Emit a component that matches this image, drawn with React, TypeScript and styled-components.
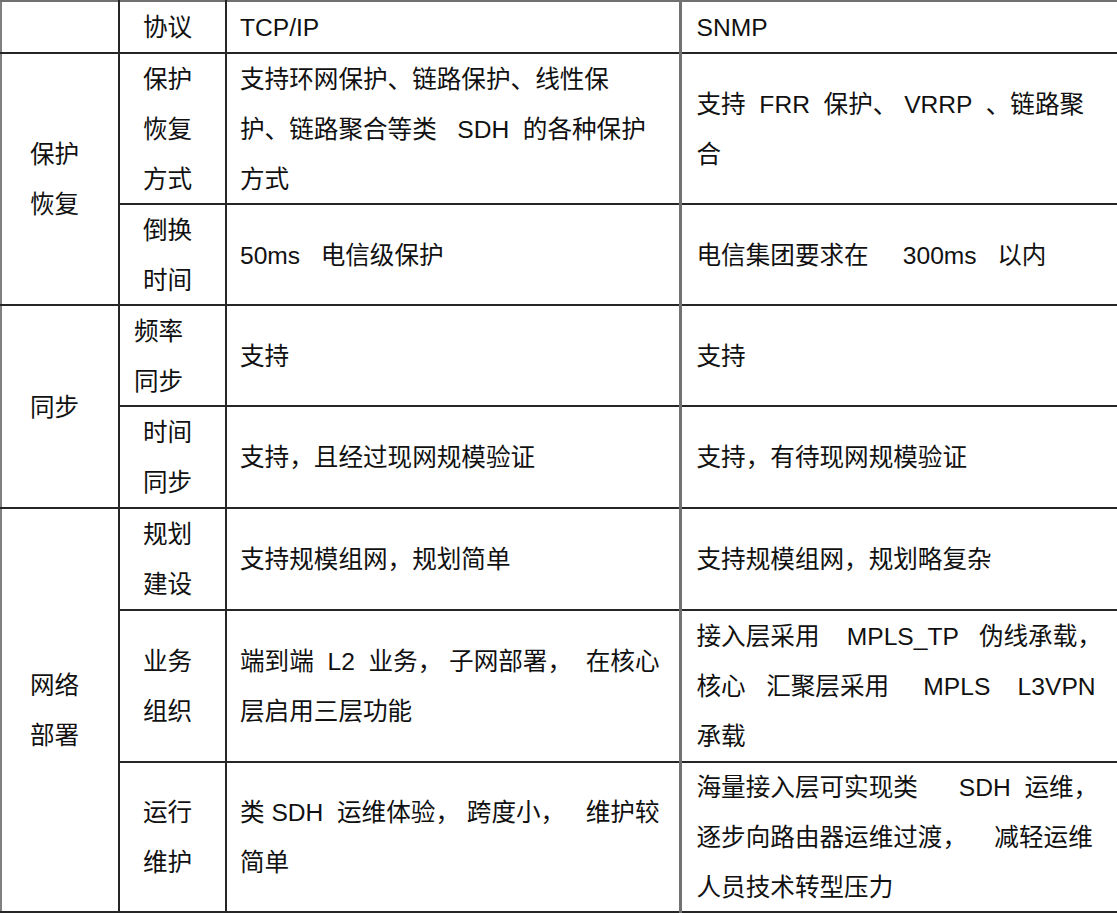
import React from "react";
import styled, { createGlobalStyle } from "styled-components";

const Global = createGlobalStyle`
  html, body { margin: 0; padding: 0; background: #ffffff; }
  body {
    font-family: "Liberation Sans", "Noto Sans CJK SC", sans-serif;
  }
`;

const Table = styled.table`
  width: 1117px;
  table-layout: fixed;
  border-collapse: collapse;
  border-top: 2px solid #707070;
  border-left: 2px solid #808080;
  border-right: 2px solid #8a8a8a;
  border-bottom: 2px solid #1e1e1e;
  font-family: "Liberation Sans", "Noto Sans CJK SC", sans-serif;
  font-size: 24.6px;
  line-height: 50px;
  color: #111111;
`;

const Row = styled.tr<{ $h: number }>`
  height: ${(p) => p.$h}px;
`;

const Cell = styled.td<{ $pad?: number; $last?: boolean; $gray?: boolean }>`
  padding: 0 0 0 ${(p) => p.$pad ?? 13}px;
  vertical-align: middle;
  text-align: left;
  border-bottom: 2px solid #262626;
  border-right: ${(p) => (p.$last ? "none" : "2px solid #262626")};
  border-left: ${(p) => (p.$gray ? "3px solid #727272" : "none")};
  white-space: pre;
  overflow: hidden;
`;

const Line = styled.span`
  display: block;
  height: 50px;
  &:last-child {
    margin-bottom: -2px;
  }
`;

type CellProps = {
  lines: string[];
  pad?: number;
  last?: boolean;
  gray?: boolean;
  rowSpan?: number;
};

const C: React.FC<CellProps> = ({ lines, pad, last, gray, rowSpan }) => (
  <Cell $pad={gray ? 15 : pad} $last={last} $gray={gray} rowSpan={rowSpan}>
    {lines.map((l, i) => (
      <Line key={i}>{l}</Line>
    ))}
  </Cell>
);

export default function App() {
  return (
    <>
      <Global />
      <Table>
        <colgroup>
          <col style={{ width: 118 }} />
          <col style={{ width: 107 }} />
          <col style={{ width: 454 }} />
          <col style={{ width: 438 }} />
        </colgroup>
        <tbody>
          <Row $h={52}>
            <C lines={[""]} pad={28} />
            <C lines={["协议"]} pad={23} />
            <C lines={["TCP/IP"]} />
            <C lines={["SNMP"]} gray last />
          </Row>
          <Row $h={151}>
            <C lines={["保护", "恢复"]} pad={28} rowSpan={2} />
            <C lines={["保护", "恢复", "方式"]} pad={23} />
            <C
              lines={[
                "支持环网保护、链路保护、线性保",
                "护、链路聚合等类   SDH  的各种保护",
                "方式",
              ]}
            />
            <C lines={["支持  FRR  保护、 VRRP  、链路聚", "合"]} gray last />
          </Row>
          <Row $h={101}>
            <C lines={["倒换", "时间"]} pad={23} />
            <C lines={["50ms   电信级保护"]} />
            <C lines={["电信集团要求在     300ms   以内"]} gray last />
          </Row>
          <Row $h={101}>
            <C lines={["同步"]} pad={28} rowSpan={2} />
            <C lines={["频率", "同步"]} pad={14} />
            <C lines={["支持"]} />
            <C lines={["支持"]} gray last />
          </Row>
          <Row $h={102}>
            <C lines={["时间", "同步"]} pad={23} />
            <C lines={["支持，且经过现网规模验证"]} />
            <C lines={["支持，有待现网规模验证"]} gray last />
          </Row>
          <Row $h={102}>
            <C lines={["网络", "部署"]} pad={28} rowSpan={3} />
            <C lines={["规划", "建设"]} pad={23} />
            <C lines={["支持规模组网，规划简单"]} />
            <C lines={["支持规模组网，规划略复杂"]} gray last />
          </Row>
          <Row $h={152}>
            <C lines={["业务", "组织"]} pad={23} />
            <C lines={["端到端  L2  业务， 子网部署，  在核心", "层启用三层功能"]} />
            <C
              lines={[
                "接入层采用    MPLS_TP   伪线承载，",
                "核心   汇聚层采用     MPLS    L3VPN",
                "承载",
              ]}
              gray
              last
            />
          </Row>
          <Row $h={149}>
            <C lines={["运行", "维护"]} pad={23} />
            <C lines={["类 SDH  运维体验， 跨度小，   维护较", "简单"]} />
            <C
              lines={[
                "海量接入层可实现类      SDH  运维，",
                "逐步向路由器运维过渡，    减轻运维",
                "人员技术转型压力",
              ]}
              gray
              last
            />
          </Row>
        </tbody>
      </Table>
    </>
  );
}
